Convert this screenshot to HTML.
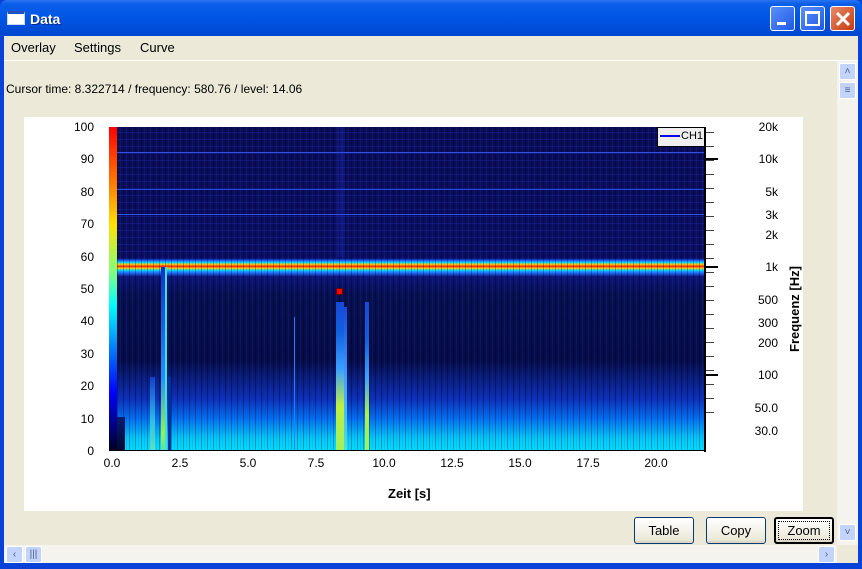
<!DOCTYPE html>
<html><head><meta charset="utf-8"><style>
*{margin:0;padding:0;box-sizing:border-box}
body{width:862px;height:569px;overflow:hidden;font-family:"Liberation Sans",sans-serif;font-size:13px;background:#0842d6;position:relative}
.title{position:absolute;left:0;top:0;width:862px;height:36px;background:linear-gradient(#2a74f0 0,#0a5ee8 4px,#0055e5 18px,#0048d0 34px);border-radius:7px 7px 0 0}
.title .t{position:absolute;left:30px;top:11px;color:#fff;font-weight:bold;font-size:14px;text-shadow:1px 1px #0a2a8a}
.ico{position:absolute;left:7px;top:11px;width:18px;height:14px;background:#fff;border:1px solid #c8d8f8;border-top:3px solid #2050c0}
.btn{position:absolute;top:6px;width:25px;height:25px;border:1px solid #fff;border-radius:3px;background:linear-gradient(135deg,#5a8ff8,#1f5ae8)}
.client{position:absolute;left:4px;top:36px;width:854px;height:527px;background:#ece9d8}
.menu{position:absolute;left:0;top:0;width:854px;height:25px;border-bottom:1px solid #fff;font-size:13px}
.menu span{position:absolute;top:4px}
.vs{position:absolute;left:833px;top:25px;width:21px;height:484px;background:#f4f3ee}
.sb{position:absolute;width:17px;height:17px;border:1px solid #fff;border-radius:2px;background:#c2d3fc;color:#4d6185;font-size:10px;text-align:center;line-height:15px}
.hs{position:absolute;left:0;top:509px;width:833px;height:18px;background:#f4f3ee}
.plot{position:absolute;left:20px;top:81px;width:779px;height:394px;background:#fff}
.pb{position:absolute;height:27px;top:481px;width:60px;border:1px solid #003c74;border-radius:3px;background:linear-gradient(#fff,#ece9d8 85%,#d6d0c0);text-align:center;line-height:25px;font-size:13px}
.yl{position:absolute;width:30px;text-align:right;font-size:12px}
.xl{position:absolute;width:40px;text-align:center;font-size:12px;top:420px}
.fl{position:absolute;width:40px;text-align:right;font-size:12px;left:734px}
</style></head><body>
<div class="title"><div class="ico"></div><div class="t">Data</div>
<div class="btn" style="left:770px"><div style="position:absolute;left:6px;top:15px;width:9px;height:3px;background:#fff"></div></div>
<div class="btn" style="left:800px"><div style="position:absolute;left:4px;top:4px;width:15px;height:15px;border:2px solid #fff;border-top-width:3px"></div></div>
<div class="btn" style="left:830px;background:linear-gradient(135deg,#e88a6a,#c63a10)"><svg width="25" height="25"><path d="M6 6L18 18M18 6L6 18" stroke="#fff" stroke-width="3"/></svg></div>
</div>
<div style="position:absolute;left:0;top:36px;width:4px;height:533px;background:#0842d6"></div>
<div class="client">
<div class="menu"><span style="left:7px">Overlay</span><span style="left:70px">Settings</span><span style="left:136px">Curve</span></div>
<div style="position:absolute;left:2px;top:46px;font-size:12px">Cursor time: 8.322714 / frequency: 580.76 / level: 14.06</div>
<div class="plot"></div>
<div style="position:absolute;left:105px;top:91px;width:8px;height:324px;background:linear-gradient(#ff0000,#ff8000 18%,#ffe000 30%,#80ff80 45%,#00ffff 55%,#0080ff 68%,#0000ff 82%,#000060 95%,#000020)"></div>
<div style="position:absolute;left:113px;top:91px;width:588px;height:324px;overflow:hidden;background:
linear-gradient(to bottom,#0a0c55 0,#0b0e60 40%,#0b1270 40.6%,#2060ff 41.2%,#00d8ff 41.8%,#ffd000 42.4%,#ff2000 43%,#ffd000 43.6%,#00d8ff 44.2%,#2070ff 45%,#0c1478 46.2%,#071050 52%,#060c48 72%,#0c30b8 84%,#0070f0 90%,#00c8f8 96%,#00e0ff 100%)">
<div style="position:absolute;inset:0;background:repeating-linear-gradient(90deg,rgba(0,0,0,.3) 0 1px,transparent 1px 3px,rgba(40,60,255,.15) 3px 4px,transparent 4px 6px)"></div>
<div style="position:absolute;left:0;top:0;width:100%;height:128px;background:repeating-linear-gradient(0deg,transparent 0 3px,rgba(30,50,200,.3) 3px 4px,transparent 4px 7px)"></div>
<div style="position:absolute;left:0;top:25px;width:100%;height:1px;background:#3050e0"></div>
<div style="position:absolute;left:0;top:62px;width:100%;height:1px;background:#2a48d8"></div>
<div style="position:absolute;left:0;top:87px;width:100%;height:1px;background:#3050e0"></div>
<div style="position:absolute;left:0;top:290px;width:8px;height:34px;background:linear-gradient(#0a1a70,#000830)"></div>
<div style="position:absolute;left:33px;top:250px;width:5px;height:74px;background:linear-gradient(#1040d0,#30c0e0 60%,#60e0c0)"></div>
<div style="position:absolute;left:44px;top:140px;width:4px;height:184px;background:linear-gradient(#1030c0,#2090ff 60%,#a0f040 90%,#60e0a0)"></div>
<div style="position:absolute;left:48px;top:140px;width:2px;height:184px;background:#40e0e0"></div>
<div style="position:absolute;left:51px;top:250px;width:3px;height:74px;background:#0030a0"></div>
<div style="position:absolute;left:220px;top:0;width:8px;height:130px;background:rgba(40,60,230,.2)"></div>
<div style="position:absolute;left:219px;top:175px;width:8px;height:149px;background:linear-gradient(#1848d8,#1060e0 20%,#3aa0ff 45%,#c0f040 70%,#a0f060)"></div>
<div style="position:absolute;left:227px;top:180px;width:3px;height:144px;background:linear-gradient(#1848d8,#40a0ff 50%,#50e0d0)"></div>
<div style="position:absolute;left:248px;top:175px;width:4px;height:149px;background:linear-gradient(#1848d8,#1060e0 25%,#3aa0ff 50%,#b0f040 75%,#a0f060)"></div>
<div style="position:absolute;left:177px;top:190px;width:1px;height:134px;background:#2080ff"></div>
</div>
<div style="position:absolute;left:332px;top:252px;width:7px;height:7px;background:#f00;border:1px solid #600"></div>
<div style="position:absolute;left:700px;top:91px;width:2px;height:325px;background:#000"></div>
<div style="position:absolute;left:105px;top:414px;width:597px;height:1px;background:#000"></div>
<div style="position:absolute;left:653px;top:91px;width:48px;height:20px;background:#eee;border:1px solid #000;font-size:11px;line-height:16px;white-space:nowrap"><span style="display:inline-block;width:20px;height:2px;background:#00f;vertical-align:middle;margin:0 1px 0 2px"></span>CH1</div>
<div style="position:absolute;left:702px;top:122px;width:12px;height:2px;background:#000"></div>
<div style="position:absolute;left:702px;top:230px;width:12px;height:2px;background:#000"></div>
<div style="position:absolute;left:702px;top:338px;width:12px;height:2px;background:#000"></div>
<div style="position:absolute;left:702px;top:90px;width:8px;height:300px;background:repeating-linear-gradient(transparent 0 6px,#444 6px 7px,transparent 7px 14px)"></div>
<div class="fl" style="top:84px">20k</div><div class="fl" style="top:116px">10k</div><div class="fl" style="top:149px">5k</div><div class="fl" style="top:172px">3k</div><div class="fl" style="top:192px">2k</div><div class="fl" style="top:224px">1k</div><div class="fl" style="top:257px">500</div><div class="fl" style="top:280px">300</div><div class="fl" style="top:300px">200</div><div class="fl" style="top:332px">100</div><div class="fl" style="top:365px">50.0</div><div class="fl" style="top:388px">30.0</div>
<div style="position:absolute;left:783px;top:260px;transform:rotate(-90deg);transform-origin:left top;font-weight:bold;font-size:13px;white-space:nowrap;margin-top:56px">Frequenz [Hz]</div>
<div class="yl" style="left:60px;top:84px">100</div><div class="yl" style="left:60px;top:116px">90</div><div class="yl" style="left:60px;top:149px">80</div><div class="yl" style="left:60px;top:181px">70</div><div class="yl" style="left:60px;top:214px">60</div><div class="yl" style="left:60px;top:246px">50</div><div class="yl" style="left:60px;top:278px">40</div><div class="yl" style="left:60px;top:311px">30</div><div class="yl" style="left:60px;top:343px">20</div><div class="yl" style="left:60px;top:376px">10</div><div class="yl" style="left:60px;top:408px">0</div>
<div class="xl" style="left:88px">0.0</div><div class="xl" style="left:156px">2.5</div><div class="xl" style="left:224px">5.0</div><div class="xl" style="left:292px">7.5</div><div class="xl" style="left:360px">10.0</div><div class="xl" style="left:428px">12.5</div><div class="xl" style="left:496px">15.0</div><div class="xl" style="left:564px">17.5</div><div class="xl" style="left:632px">20.0</div>
<div style="position:absolute;left:384px;top:450px;font-weight:bold;font-size:13px">Zeit [s]</div>
<div class="pb" style="left:630px">Table</div>
<div class="pb" style="left:702px">Copy</div>
<div class="pb" style="left:770px;border:2px solid #000;line-height:23px"><div style="position:absolute;inset:2px;border:1px dotted #000"></div>Zoom</div>
<div class="vs"><div class="sb" style="left:2px;top:2px">&#708;</div><div class="sb" style="left:2px;top:21px">&#8801;</div><div class="sb" style="left:2px;top:463px">&#709;</div></div>
<div class="hs"><div class="sb" style="left:2px;top:1px">&lsaquo;</div><div class="sb" style="left:21px;top:1px">|||</div><div class="sb" style="left:814px;top:1px">&rsaquo;</div></div>
</div>
<div style="position:absolute;left:858px;top:36px;width:4px;height:533px;background:#0842d6"></div>
<div style="position:absolute;left:0;top:563px;width:862px;height:6px;background:#0842d6"></div>
</body></html>
